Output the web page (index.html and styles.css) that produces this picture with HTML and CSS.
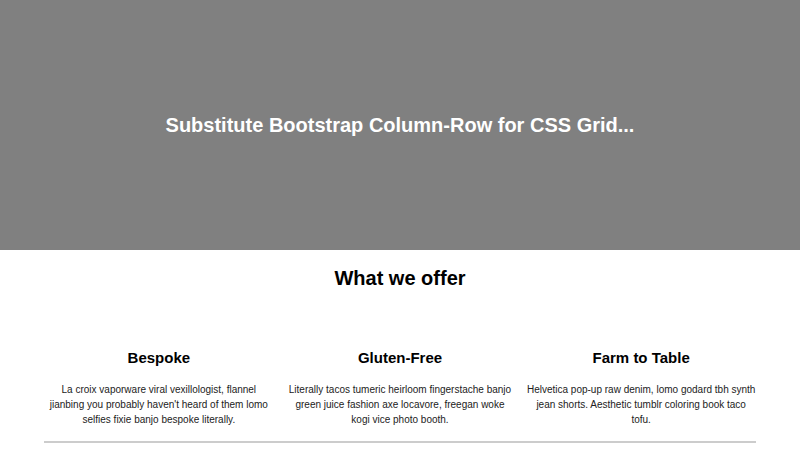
FILE: index.html
```html
<!DOCTYPE html>
<html>
<head>
<meta charset="utf-8">
<link rel="stylesheet" href="styles.css">
</head>
<body>
<header class="hero">
  <h1 class="hero-title">Substitute Bootstrap Column-Row for CSS Grid...</h1>
</header>
<section class="offer">
  <h2 class="offer-title">What we offer</h2>
  <div class="features">
    <div class="feature">
      <h3 class="feature-title">Bespoke</h3>
      <p class="feature-text">La croix vaporware viral vexillologist, flannel jianbing you probably haven't heard of them lomo selfies fixie banjo bespoke literally.</p>
    </div>
    <div class="feature">
      <h3 class="feature-title">Gluten-Free</h3>
      <p class="feature-text">Literally tacos tumeric heirloom fingerstache banjo green juice fashion axe locavore, freegan woke kogi vice photo booth.</p>
    </div>
    <div class="feature">
      <h3 class="feature-title">Farm to Table</h3>
      <p class="feature-text">Helvetica pop-up raw denim, lomo godard tbh synth jean shorts. Aesthetic tumblr coloring book taco tofu.</p>
    </div>
  </div>
  <hr class="divider">
</section>
</body>
</html>
```
FILE: styles.css
```css
html, body {
  margin: 0;
  padding: 0;
  background: #ffffff;
  font-family: "Liberation Sans", Arial, sans-serif;
  color: #000;
}
.hero {
  height: 250px;
  background: #808080;
  display: flex;
  align-items: center;
  justify-content: center;
}
.hero-title {
  margin: 0;
  color: #fff;
  font-size: 20px;
  font-weight: bold;
}
.offer {
  width: 712px;
  margin: 0 auto;
}
.offer-title {
  margin: 16px 0 0;
  text-align: center;
  font-size: 20px;
  line-height: 24px;
  font-weight: bold;
}
.features {
  display: grid;
  grid-template-columns: repeat(3, 1fr);
  column-gap: 11.5px;
  margin-top: 58px;
}
.feature {
  text-align: center;
}
.feature-title {
  margin: 0;
  font-size: 15px;
  line-height: 20px;
  font-weight: bold;
}
.feature-text {
  margin: 14px 0 0;
  font-size: 10px;
  line-height: 15px;
  color: #222;
}
.divider {
  margin: 14px 0 0;
  border: 0;
  border-top: 2px solid #ccc;
  height: 0;
}
```
